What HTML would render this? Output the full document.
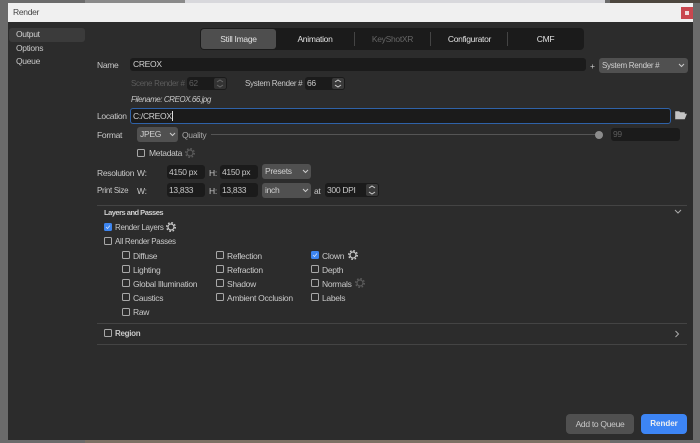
<!DOCTYPE html>
<html><head><meta charset="utf-8"><style>
html,body{margin:0;padding:0}
body{width:700px;height:443px;overflow:hidden;position:relative;background:#6b6b6b;font-family:"Liberation Sans",sans-serif;font-size:8.5px;letter-spacing:-.3px;color:#c8c8c8}
#w{position:absolute;left:0;top:0;width:700px;height:443px;filter:blur(.3px)}
#w div{position:absolute;white-space:nowrap;box-sizing:border-box}
#w .t{line-height:12px;height:12px}
#w .i{background:#1b1b1b;border-radius:3px;color:#c8c8c8;line-height:14px;padding-left:4px}
#w .s{background:#505050;border-radius:3px;color:#d0d0d0;line-height:15px;padding-left:3px;height:15px}
.s svg{position:absolute}
#w .c{width:8px;height:8px;border:1px solid #a8a8a8;border-radius:1.5px}
#w .k{width:8px;height:8px;background:#3d85f0;border-radius:1.5px}
#w .l{background:#444;height:1px}
#w .tab{top:29px;height:20px;line-height:20px;text-align:center;color:#e0e0e0}
#w .sep{top:32px;width:1px;height:14px;background:#444}
#w .n{font-size:8px;letter-spacing:-.3px}
svg{display:block}
</style></head><body><div id="w">
<div style="left:85px;top:0;width:100px;height:3px;background:#8a8a8a"></div>
<div style="left:185px;top:0;width:420px;height:3px;background:#d8d8dc"></div>
<div style="left:610px;top:0;width:90px;height:3px;background:#4c463e"></div>
<div style="left:85px;top:440px;width:525px;height:3px;background:#7d7064"></div>
<div style="left:8px;top:3px;width:685px;height:437px;background:#2c2c2c"></div>
<div style="left:8px;top:3px;width:685px;height:19px;background:#f0f0f0;color:#444;line-height:19px;padding-left:5px">Render</div>
<div style="left:681px;top:7px;width:12px;height:12px;background:#c9474f"></div>
<div style="left:685px;top:11px;width:4px;height:4px;background:#f0dede"></div>

<div style="left:9px;top:28px;width:76px;height:14px;background:#3b3b3b;border-radius:3px"></div>
<div class="t" style="left:16px;top:28px;color:#d0d0d0">Output</div>
<div class="t" style="left:16px;top:42px">Options</div>
<div class="t" style="left:16px;top:55px">Queue</div>

<div style="left:200px;top:28px;width:384px;height:22px;background:#1b1b1b;border-radius:4px"></div>
<div class="tab" style="left:201px;width:75px;background:#4e4e4e;border-radius:3px">Still Image</div>
<div class="tab" style="left:276px;width:78px">Animation</div>
<div class="sep" style="left:354px"></div>
<div class="tab" style="left:354px;width:77px;color:#666">KeyShotXR</div>
<div class="sep" style="left:430px"></div>
<div class="tab" style="left:431px;width:77px">Configurator</div>
<div class="sep" style="left:507px"></div>
<div class="tab" style="left:508px;width:75px">CMF</div>

<div class="t" style="left:97px;top:59px">Name</div>
<div class="i" style="left:130px;top:58px;width:456px;height:13px;line-height:13px;padding-left:3px;color:#d0d0d0">CREOX</div>
<div class="t" style="left:590px;top:60px">+</div>
<div class="s n" style="left:599px;top:58px;width:89px">System Render #<svg style="left:79px;top:5px" width="7" height="5"><path d="M1 1L3.5 3.5L6 1" fill="none" stroke="#ccc"/></svg></div>

<div class="t n" style="left:131px;top:78px;color:#5c5c5c">Scene Render #</div>
<div class="i" style="left:187px;top:77px;width:40px;height:13px;line-height:13px;padding-left:2px;color:#5c5c5c">62</div>
<div style="left:214px;top:78px;width:12px;height:11px;background:#333;border-radius:2px"></div>
<svg style="position:absolute;left:216px;top:78px" width="8" height="11"><path d="M1 4L4 2L7 4M1 7L4 9L7 7" fill="none" stroke="#666"/></svg>
<div class="t n" style="left:245px;top:78px">System Render #</div>
<div class="i" style="left:305px;top:77px;width:40px;height:13px;line-height:13px;padding-left:2px">66</div>
<div style="left:332px;top:78px;width:12px;height:11px;background:#3a3a3a;border-radius:2px"></div>
<svg style="position:absolute;left:334px;top:78px" width="8" height="11"><path d="M1 4L4 2L7 4M1 7L4 9L7 7" fill="none" stroke="#ccc"/></svg>
<div class="t n" style="left:131px;top:94px;font-style:italic;letter-spacing:-.45px">Filename: CREOX.66.jpg</div>

<div class="t" style="left:97px;top:110px">Location</div>
<div class="i" style="left:130px;top:108px;width:541px;height:16px;border:1px solid #2f62a8;line-height:14px;padding-left:2px;color:#d0d0d0">C:/CREOX<span style="border-left:1px solid #ddd"></span></div>
<svg style="position:absolute;left:675px;top:110px" width="12" height="10"><path d="M0.5 9V1.5H4L5 2.5H9.5V4H3L0.5 9H9.5L11.5 4H3" fill="#c4c4c4" stroke="#c4c4c4" stroke-width=".6"/></svg>

<div class="t" style="left:97px;top:129px">Format</div>
<div class="s" style="left:137px;top:127px;width:41px">JPEG<svg style="left:32px;top:5px" width="7" height="5"><path d="M1 1L3.5 3.5L6 1" fill="none" stroke="#ccc"/></svg></div>
<div class="t" style="left:182px;top:129px;color:#a8a8a8">Quality</div>
<div style="left:211px;top:134px;width:388px;height:1px;background:#555"></div>
<div style="left:595px;top:131px;width:8px;height:8px;border-radius:50%;background:#8c8c8c"></div>
<div class="i" style="left:611px;top:128px;width:69px;height:13px;line-height:13px;padding-left:2px;color:#5c5c5c">99</div>

<div class="c" style="left:137px;top:149px"></div>
<div class="t" style="left:149px;top:147px">Metadata</div>
<svg style="position:absolute;left:185px;top:148px" width="10" height="10"><circle cx="5" cy="5" r="3" fill="none" stroke="#5a5a5a" stroke-width="1.2"/><circle cx="5" cy="5" r="4.3" fill="none" stroke="#5a5a5a" stroke-width="1.4" stroke-dasharray="1.7 1.7"/></svg>

<div class="t" style="left:97px;top:167px">Resolution</div>
<div class="t" style="left:137px;top:167px">W:</div>
<div class="i" style="left:167px;top:165px;width:38px;height:14px;padding-left:2px">4150 px</div>
<div class="t" style="left:209px;top:167px">H:</div>
<div class="i" style="left:220px;top:165px;width:38px;height:14px;padding-left:2px">4150 px</div>
<div class="s" style="left:262px;top:164px;width:49px">Presets<svg style="left:40px;top:5px" width="7" height="5"><path d="M1 1L3.5 3.5L6 1" fill="none" stroke="#ccc"/></svg></div>

<div class="t n" style="left:97px;top:185px">Print Size</div>
<div class="t" style="left:137px;top:185px">W:</div>
<div class="i" style="left:167px;top:183px;width:38px;height:14px;padding-left:2px">13,833</div>
<div class="t" style="left:209px;top:185px">H:</div>
<div class="i" style="left:220px;top:183px;width:38px;height:14px;padding-left:2px">13,833</div>
<div class="s" style="left:262px;top:183px;width:49px">inch<svg style="left:40px;top:5px" width="7" height="5"><path d="M1 1L3.5 3.5L6 1" fill="none" stroke="#ccc"/></svg></div>
<div class="t" style="left:314px;top:185px">at</div>
<div class="i" style="left:325px;top:183px;width:54px;height:14px;padding-left:2px">300 DPI</div>
<div style="left:366px;top:184px;width:12px;height:12px;background:#3a3a3a;border-radius:2px"></div>
<svg style="position:absolute;left:368px;top:184px" width="8" height="12"><path d="M1 4L4 2L7 4M1 8L4 10L7 8" fill="none" stroke="#ccc"/></svg>

<div class="l" style="left:97px;top:205px;width:590px"></div>
<div class="t" style="left:104px;top:207px;font-weight:bold;color:#d0d0d0;font-size:7.5px;letter-spacing:-.5px">Layers and Passes</div>
<svg style="position:absolute;left:674px;top:209px" width="8" height="6"><path d="M1 1L4 4L7 1" fill="none" stroke="#aaa"/></svg>

<div class="k" style="left:104px;top:223px"></div><svg style="position:absolute;left:104px;top:223px" width="8" height="8"><path d="M2 4L3.5 5.5L6 2.5" fill="none" stroke="#cfe0fb" stroke-width=".8"/></svg>
<div class="t n" style="left:115px;top:222px">Render Layers</div>
<svg style="position:absolute;left:166px;top:222px" width="10" height="10"><circle cx="5" cy="5" r="3" fill="none" stroke="#c8c8c8" stroke-width="1.2"/><circle cx="5" cy="5" r="4.3" fill="none" stroke="#c8c8c8" stroke-width="1.4" stroke-dasharray="1.7 1.7"/></svg>
<div class="c" style="left:104px;top:237px"></div>
<div class="t n" style="left:115px;top:236px">All Render Passes</div>

<div class="c" style="left:122px;top:251px"></div><div class="t" style="left:133px;top:250px">Diffuse</div>
<div class="c" style="left:122px;top:265px"></div><div class="t" style="left:133px;top:264px">Lighting</div>
<div class="c" style="left:122px;top:279px"></div><div class="t" style="left:133px;top:278px">Global Illumination</div>
<div class="c" style="left:122px;top:293px"></div><div class="t" style="left:133px;top:292px">Caustics</div>
<div class="c" style="left:122px;top:308px"></div><div class="t" style="left:133px;top:306px">Raw</div>

<div class="c" style="left:216px;top:251px"></div><div class="t" style="left:227px;top:250px">Reflection</div>
<div class="c" style="left:216px;top:265px"></div><div class="t" style="left:227px;top:264px">Refraction</div>
<div class="c" style="left:216px;top:279px"></div><div class="t" style="left:227px;top:278px">Shadow</div>
<div class="c" style="left:216px;top:293px"></div><div class="t" style="left:227px;top:292px">Ambient Occlusion</div>

<div class="k" style="left:311px;top:251px"></div><svg style="position:absolute;left:311px;top:251px" width="8" height="8"><path d="M2 4L3.5 5.5L6 2.5" fill="none" stroke="#cfe0fb" stroke-width=".8"/></svg>
<div class="t" style="left:322px;top:250px">Clown</div>
<svg style="position:absolute;left:348px;top:250px" width="10" height="10"><circle cx="5" cy="5" r="3" fill="none" stroke="#c8c8c8" stroke-width="1.2"/><circle cx="5" cy="5" r="4.3" fill="none" stroke="#c8c8c8" stroke-width="1.4" stroke-dasharray="1.7 1.7"/></svg>
<div class="c" style="left:311px;top:265px"></div><div class="t" style="left:322px;top:264px">Depth</div>
<div class="c" style="left:311px;top:279px"></div><div class="t" style="left:322px;top:278px">Normals</div>
<svg style="position:absolute;left:355px;top:278px" width="10" height="10"><circle cx="5" cy="5" r="3" fill="none" stroke="#5a5a5a" stroke-width="1.2"/><circle cx="5" cy="5" r="4.3" fill="none" stroke="#5a5a5a" stroke-width="1.4" stroke-dasharray="1.7 1.7"/></svg>
<div class="c" style="left:311px;top:293px"></div><div class="t" style="left:322px;top:292px">Labels</div>

<div class="l" style="left:97px;top:323px;width:590px"></div>
<div class="c" style="left:104px;top:329px"></div>
<div class="t" style="left:115px;top:328px;font-weight:bold;font-size:8px">Region</div>
<svg style="position:absolute;left:674px;top:330px" width="6" height="8"><path d="M1.5 1L4.5 4L1.5 7" fill="none" stroke="#aaa"/></svg>
<div class="l" style="left:97px;top:344px;width:590px"></div>

<div style="left:566px;top:414px;width:68px;height:20px;background:#505050;border-radius:4px;text-align:center;line-height:20px;color:#c8c8c8">Add to Queue</div>
<div style="left:641px;top:414px;width:46px;height:20px;background:#3d85f5;border-radius:4px;text-align:center;line-height:20px;color:#f0f0f0;font-weight:bold;font-size:8px;letter-spacing:0">Render</div>
</div></body></html>
